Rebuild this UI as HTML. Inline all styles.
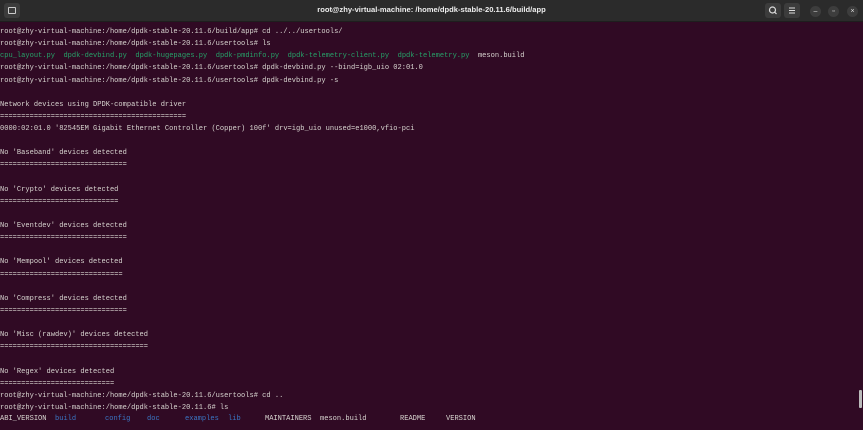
<!DOCTYPE html>
<html><head><meta charset="utf-8"><style>
*{margin:0;padding:0;box-sizing:border-box}
body{width:863px;height:430px;overflow:hidden;background:#300a24;position:relative;font-family:"Liberation Mono",monospace}
.hdr{position:absolute;left:0;top:0;width:863px;height:22px;background:#2b2b2b;border-bottom:1px solid #1e1e1e}
.title{position:absolute;left:0;right:0;top:5px;text-align:center;color:#eee;font:bold 7.6px "Liberation Sans",sans-serif}
.btn{position:absolute;top:3px;width:16px;height:15px;background:#3c3c3c;border-radius:3px}
.cb{position:absolute;top:6px;width:11px;height:11px;border-radius:50%;background:#3d3d3d;color:#ddd;font:7px "Liberation Sans",sans-serif;text-align:center;line-height:11px}
.t{position:absolute;left:0;top:26px;color:#d8d5d0;font-size:7.05px;line-height:12.125px;white-space:pre}
.r{position:absolute;top:415px;color:#d8d5d0;font-size:7.05px;white-space:pre}
.g{color:#26a269}.b{color:#3a76c4}
.sb{position:absolute;left:859px;top:390px;width:3px;height:18px;background:#bbb;border-radius:1px}
</style></head><body>
<div class="hdr">
<div class="btn" style="left:4px"><div style="position:absolute;left:4px;top:4px;width:8px;height:7px;border:1px solid #ccc;border-radius:1px"></div></div>
<div class="title">root@zhy-virtual-machine: /home/dpdk-stable-20.11.6/build/app</div>
<div class="btn" style="left:765px"><svg width="16" height="15"><circle cx="7.5" cy="7" r="3" fill="none" stroke="#ddd" stroke-width="1.2"/><line x1="9.7" y1="9.2" x2="11.5" y2="11" stroke="#ddd" stroke-width="1.2"/></svg></div>
<div class="btn" style="left:784px"><svg width="16" height="15"><path d="M5 5h6M5 7.5h6M5 10h6" stroke="#ddd" stroke-width="1"/></svg></div>
<div class="cb" style="left:810px">–</div>
<div class="cb" style="left:828px">▫</div>
<div class="cb" style="left:847px">×</div>
</div>
<div class="t">root@zhy-virtual-machine:/home/dpdk-stable-20.11.6/build/app# cd ../../usertools/
root@zhy-virtual-machine:/home/dpdk-stable-20.11.6/usertools# ls
<span class="g">cpu_layout.py</span>  <span class="g">dpdk-devbind.py</span>  <span class="g">dpdk-hugepages.py</span>  <span class="g">dpdk-pmdinfo.py</span>  <span class="g">dpdk-telemetry-client.py</span>  <span class="g">dpdk-telemetry.py</span>  meson.build
root@zhy-virtual-machine:/home/dpdk-stable-20.11.6/usertools# dpdk-devbind.py --bind=igb_uio 02:01.0
root@zhy-virtual-machine:/home/dpdk-stable-20.11.6/usertools# dpdk-devbind.py -s

Network devices using DPDK-compatible driver
============================================
0000:02:01.0 '82545EM Gigabit Ethernet Controller (Copper) 100f' drv=igb_uio unused=e1000,vfio-pci

No 'Baseband' devices detected
==============================

No 'Crypto' devices detected
============================

No 'Eventdev' devices detected
==============================

No 'Mempool' devices detected
=============================

No 'Compress' devices detected
==============================

No 'Misc (rawdev)' devices detected
===================================

No 'Regex' devices detected
===========================
root@zhy-virtual-machine:/home/dpdk-stable-20.11.6/usertools# cd ..
root@zhy-virtual-machine:/home/dpdk-stable-20.11.6# ls
</div>
<span class="r" style="left:0">ABI_VERSION</span>
<span class="r b" style="left:55px">build</span>
<span class="r b" style="left:105px">config</span>
<span class="r b" style="left:147px">doc</span>
<span class="r b" style="left:185px">examples</span>
<span class="r b" style="left:228px">lib</span>
<span class="r" style="left:265px">MAINTAINERS</span>
<span class="r" style="left:320px">meson.build</span>
<span class="r" style="left:400px">README</span>
<span class="r" style="left:446px">VERSION</span>
<div class="sb"></div>
</body></html>
